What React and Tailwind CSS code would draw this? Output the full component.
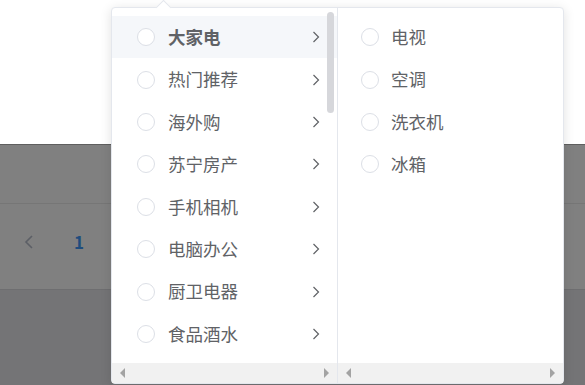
const left = ['大家电', '热门推荐', '海外购', '苏宁房产', '手机相机', '电脑办公', '厨卫电器', '食品酒水'];
const right = ['电视', '空调', '洗衣机', '冰箱'];

function Radio() {
  return <span className="w-[18px] h-[18px] rounded-full border border-[#dcdfe6] bg-white shrink-0" />;
}

function Chevron() {
  return (
    <svg width="8" height="12" viewBox="0 0 8 12" className="shrink-0">
      <path d="M1.5 1 L6.5 6 L1.5 11" fill="none" stroke="#606266" strokeWidth="1.2" />
    </svg>
  );
}

function HScroll() {
  return (
    <div className="h-[20px] bg-[#f1f1f1] flex items-center justify-between px-[8px] shrink-0">
      <span className="w-0 h-0 border-y-[5px] border-y-transparent border-r-[5px] border-r-[#a3a3a3]" />
      <span className="w-0 h-0 border-y-[5px] border-y-transparent border-l-[5px] border-l-[#a3a3a3]" />
    </div>
  );
}

export default function App() {
  return (
    <div
      className="relative w-[585px] h-[385px] overflow-hidden"
      style={{ fontFamily: '"Noto Sans CJK SC", "Noto Sans", sans-serif' }}
    >
      <div className="h-[144px] bg-white" />
      <div className="h-[145px] bg-[#808080] border-t border-[#5f5f5f] flex flex-col">
        <div className="h-[59px] border-b border-[#767676]" />
        <div className="flex items-center h-[76px] pl-[24px] gap-[40px]">
          <svg width="10" height="14" viewBox="0 0 10 14">
            <path d="M8 1 L2 7 L8 13" fill="none" stroke="#5c5f66" strokeWidth="1.6" />
          </svg>
          <span className="text-[#1f4c7d] font-bold text-[17px]">1</span>
        </div>
      </div>
      <div className="flex-1 h-[96px] bg-[#747476] border-t border-[#6e6e70]" />

      <div className="absolute left-[111px] top-[7px] w-[453px] h-[377px] bg-white border border-[#e4e7ed] rounded-[4px] shadow-[0_2px_12px_rgba(0,0,0,0.12)] flex">
        <span className="absolute -top-[6px] left-[46px] w-[11px] h-[11px] bg-white border-l border-t border-[#e4e7ed] rotate-45" />
        <div className="relative w-[226px] border-r border-[#e4e7ed] flex flex-col">
          <div className="flex-1 pt-[8px]">
            {left.map((t, i) => (
              <div
                key={t}
                className={`h-[42.4px] flex items-center pl-[25px] pr-[17px] ${i === 0 ? 'bg-[#f5f7fa]' : ''}`}
              >
                <Radio />
                <span className={`ml-[13px] flex-1 text-[17.5px] text-[#606266] ${i === 0 ? 'font-bold' : ''}`}>{t}</span>
                <Chevron />
              </div>
            ))}
          </div>
          <span className="absolute right-[3px] top-[4px] w-[7px] h-[101px] rounded-full bg-[#d6d7db]" />
          <HScroll />
        </div>
        <div className="w-[225px] flex flex-col">
          <div className="flex-1 pt-[8px]">
            {right.map((t) => (
              <div key={t} className="h-[42.4px] flex items-center pl-[23px]">
                <Radio />
                <span className="ml-[12px] text-[17.5px] text-[#606266]">{t}</span>
              </div>
            ))}
          </div>
          <HScroll />
        </div>
      </div>
    </div>
  );
}
